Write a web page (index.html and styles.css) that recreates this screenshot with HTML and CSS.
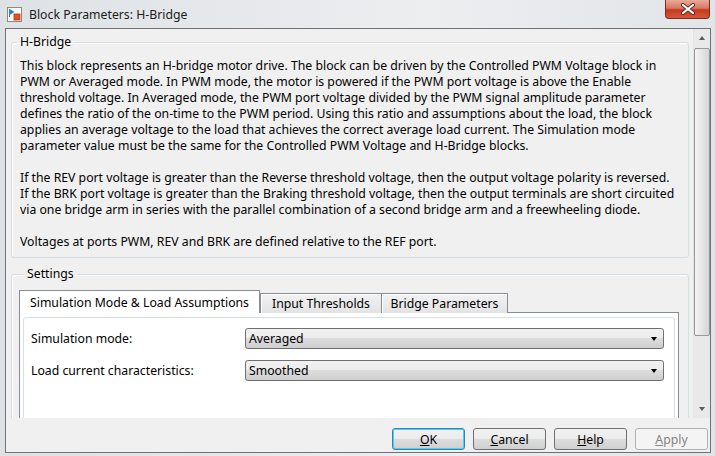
FILE: index.html
```html
<!DOCTYPE html>
<html lang="en">
<head>
  <meta charset="UTF-8" />
  <title>Block Parameters: H-Bridge</title>
  <link rel="stylesheet" href="styles.css">
</head>
<body>
  <div class="window">
    <div class="titlebar">
      <svg class="app-icon" width="16" height="16" viewBox="0 0 16 16">
        <rect x="0.5" y="0.5" width="14" height="14" fill="#fbfbfb" stroke="#8a8a8a"/>
        <path d="M2.5 2 L7.5 5 L2.5 8 Z" fill="#2f7fd0"/>
        <line x1="2.5" y1="2" x2="2.5" y2="10" stroke="#2f7fd0" stroke-width="1"/>
        <rect x="7" y="7" width="6" height="6" fill="#e2531c" stroke="#b83a10" stroke-width="0.8"/>
      </svg>
      <span class="title">Block Parameters: H-Bridge</span>
      <div class="close-btn">
        <svg width="16" height="12" viewBox="0 0 16 12">
          <path d="M3 2 L13 10 M13 2 L3 10" stroke="#5a2a22" stroke-width="4" stroke-linecap="round"/>
          <path d="M3 2 L13 10 M13 2 L3 10" stroke="#ffffff" stroke-width="2.2" stroke-linecap="round"/>
        </svg>
      </div>
    </div>

    <div class="client">
      <div class="scroll">
        <div class="content">
          <fieldset class="group">
            <legend>H-Bridge</legend>
            <p>This block represents an H-bridge motor drive. The block can be driven by the Controlled PWM Voltage block in<br>
            PWM or Averaged mode. In PWM mode, the motor is powered if the PWM port voltage is above the Enable<br>
            threshold voltage. In Averaged mode, the PWM port voltage divided by the PWM signal amplitude parameter<br>
            defines the ratio of the on-time to the PWM period. Using this ratio and assumptions about the load, the block<br>
            applies an average voltage to the load that achieves the correct average load current. The Simulation mode<br>
            parameter value must be the same for the Controlled PWM Voltage and H-Bridge blocks.</p>
            <p>If the REV port voltage is greater than the Reverse threshold voltage, then the output voltage polarity is reversed.<br>
            If the BRK port voltage is greater than the Braking threshold voltage, then the output terminals are short circuited<br>
            via one bridge arm in series with the parallel combination of a second bridge arm and a freewheeling diode.</p>
            <p>Voltages at ports PWM, REV and BRK are defined relative to the REF port.</p>
          </fieldset>

          <fieldset class="group settings">
            <legend>Settings</legend>
            <div class="tabs">
              <div class="tab active tab-sim">Simulation Mode &amp; Load Assumptions</div>
              <div class="tab tab-input">Input Thresholds</div>
              <div class="tab tab-bridge">Bridge Parameters</div>
            </div>
            <div class="panel">
              <div class="panel-inner">
                <div class="row">
                  <label>Simulation mode:</label>
                  <div class="select">Averaged<span class="arrow"></span></div>
                </div>
                <div class="row">
                  <label>Load current characteristics:</label>
                  <div class="select">Smoothed<span class="arrow"></span></div>
                </div>
              </div>
            </div>
          </fieldset>
        </div>

        <div class="vscroll">
          <div class="sb-btn"><span class="sb-up"></span></div>
          <div class="sb-track"><div class="sb-thumb"></div></div>
          <div class="sb-btn"><span class="sb-down"></span></div>
        </div>
      </div>

      <div class="buttons">
        <button class="btn focused"><u>O</u>K</button>
        <button class="btn"><u>C</u>ancel</button>
        <button class="btn"><u>H</u>elp</button>
        <button class="btn disabled"><u>A</u>pply</button>
      </div>
    </div>
  </div>
</body>
</html>
```

FILE: styles.css
```css
body { margin: 0; background: #e4e7ea; font-family: "Noto Sans", sans-serif; font-size: 12.25px; color: #000; }
.window { width: 715px; height: 456px; background: linear-gradient(90deg, #dfe2e5 0%, #eceef0 60%, #e2e5e8 100%); overflow: hidden; }

.titlebar { height: 28px; display: flex; align-items: flex-start; }
.app-icon { margin: 7px 0 0 7px; }
.title { margin: 6px 0 0 6px; color: #1b1b1b; }
.close-btn { margin-left: auto; margin-right: 5px; width: 43px; height: 18px; border: 1px solid #7e2a1c; border-top: none; border-radius: 0 0 4px 4px; background: linear-gradient(#e9a99a 0%, #d77a64 45%, #c3391d 55%, #d4583b 100%); display: flex; align-items: center; justify-content: center; }

.client { margin-left: 5px; width: 704px; height: 423px; border: 1px solid #6f7175; background: #f0f0f0; }
.scroll { height: 389px; display: flex; overflow: hidden; }
.content { width: 688px; padding-top: 5px; }

.group { margin: 0 4px 0 5px; padding: 0 0 7px; border: 1px solid #d5dfe5; border-radius: 3px; box-shadow: inset 1px 1px #fff; }
.group legend { margin-left: 5px; padding: 0 3px; line-height: 16px; }
.group p { margin: 0 0 16px; padding: 0 8px; line-height: 16px; white-space: nowrap; }
.group p:first-of-type { margin-top: 8px; }
.group p:last-child { margin-bottom: 0; }

.settings { margin-top: 8px; padding: 8px 9px 0 7px; }
.tabs { display: flex; align-items: flex-end; height: 23px; position: relative; z-index: 1; }
.tab { box-sizing: border-box; height: 20px; line-height: 19px; text-align: center; border: 1px solid #898c95; border-bottom: none; background: linear-gradient(#f2f2f2, #e3e3e3); box-shadow: inset 1px 1px #fff; white-space: nowrap; }
.tab.active { height: 23px; line-height: 23px; background: #fff; box-shadow: none; }
.tab-sim { width: 241px; }
.tab-input { width: 122px; }
.tab-bridge { width: 127px; margin-left: -1px; }
.panel { margin-top: -1px; height: 150px; border: 1px solid #898c95; background: #fff; }
.panel-inner { margin: 4px 3px 0 3px; height: 130px; padding: 10px 10px 0 7px; border: 1px solid #d5dfe5; border-radius: 3px; }

.row { display: flex; align-items: center; margin-bottom: 11px; }
.row label { width: 214px; }
.select { flex: 1; height: 19px; line-height: 19px; padding-left: 3px; border: 1px solid #707070; border-radius: 3px; background: linear-gradient(#f2f2f2 0%, #ebebeb 50%, #dddddd 50%, #cfcfcf 100%); display: flex; justify-content: space-between; align-items: center; }
.arrow { margin-right: 6px; width: 0; height: 0; border-left: 3.5px solid transparent; border-right: 3.5px solid transparent; border-top: 4px solid #000; }

.vscroll { width: 16px; display: flex; flex-direction: column; background: #e9e9e9; border-left: 1px solid #e3e3e3; }
.sb-btn { height: 18px; display: flex; align-items: center; justify-content: center; }
.sb-up { border-left: 3.5px solid transparent; border-right: 3.5px solid transparent; border-bottom: 4px solid #5d5d5d; }
.sb-down { border-left: 3.5px solid transparent; border-right: 3.5px solid transparent; border-top: 4px solid #5d5d5d; }
.sb-track { flex: 1; padding-top: 1px; }
.sb-thumb { height: 286px; border: 1px solid #979797; border-radius: 2px; background: linear-gradient(90deg, #f4f4f4, #e6e6e6 50%, #d5d5d5); }

.buttons { height: 34px; display: flex; justify-content: flex-end; gap: 8px; padding: 10px 2px 0 0; box-sizing: border-box; }
.btn { width: 73px; height: 22px; padding: 0; font: inherit; color: #000; border: 1px solid #707070; border-radius: 3px; background: linear-gradient(#f2f2f2 0%, #ebebeb 50%, #dddddd 50%, #cfcfcf 100%); }
.btn.focused { border-color: #3c7fb1; box-shadow: inset 0 0 0 1px #48d1ff; }
.btn.disabled { color: #838383; border-color: #adb2b5; background: #f4f4f4; }
```
